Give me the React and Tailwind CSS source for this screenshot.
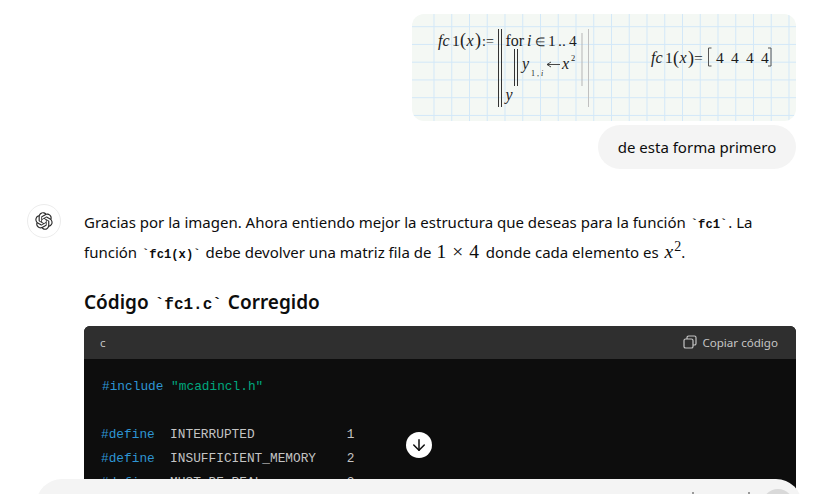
import React from 'react';
import { ArrowDown } from 'lucide-react';

const codeFont = { fontFamily: '"Liberation Mono", monospace' };
const mathFont = { fontFamily: '"Liberation Serif", serif' };

function FormulaImage() {
  const gridX = Array.from({ length: 22 }, (_, i) => 22 + i * 17.75);
  const gridY = Array.from({ length: 6 }, (_, i) => 12.7 + i * 17.75);
  return (
    <svg width="384" height="107" viewBox="0 0 384 107" className="block rounded-xl bg-[#f4f8f4]" fontFamily="Liberation Serif, serif" fill="#1c1c1c">
      {gridX.map((x) => <line key={x} x1={x} y1="0" x2={x} y2="107" stroke="#d3e8f8" strokeWidth="1" />)}
      {gridY.map((y) => <line key={y} x1="0" y1={y} x2="384" y2={y} stroke="#d3e8f8" strokeWidth="1" />)}

      <text x="26" y="31.5" fontSize="16" fontStyle="italic">fc</text>
      <text x="40" y="31.5" fontSize="15.5">1</text>
      <text x="48" y="32" fontSize="18">(</text>
      <text x="54.5" y="31.5" fontSize="16" fontStyle="italic">x</text>
      <text x="63" y="32" fontSize="18">)</text>
      <text x="70" y="31.5" fontSize="14">:=</text>

      <line x1="86.5" y1="15" x2="86.5" y2="93" stroke="#333" />
      <line x1="89.5" y1="15" x2="89.5" y2="93" stroke="#333" />
      <text x="93.5" y="31.5" fontSize="16">for</text>
      <text x="115" y="31.5" fontSize="16" fontStyle="italic">i</text>
      <text x="123" y="31.5" fontSize="12">∈</text>
      <text x="136" y="31.5" fontSize="15.5">1</text>
      <text x="146" y="31.5" fontSize="15.5">..</text>
      <text x="157" y="31.5" fontSize="15.5">4</text>

      <line x1="102.5" y1="35" x2="102.5" y2="72" stroke="#333" />
      <line x1="105.5" y1="35" x2="105.5" y2="72" stroke="#333" />
      <text x="110" y="55" fontSize="16" fontStyle="italic">y</text>
      <text x="119" y="62" fontSize="8">1</text>
      <text x="125" y="62" fontSize="8">,</text>
      <text x="129" y="62" fontSize="8" fontStyle="italic">i</text>
      <path d="M135 50.5H148M135 50.5L139 48M135 50.5L139 53" fill="none" stroke="#333" strokeWidth="0.9" />
      <text x="150" y="54.5" fontSize="16" fontStyle="italic">x</text>
      <text x="159" y="47" fontSize="8.5">2</text>
      <text x="93.5" y="86" fontSize="16" fontStyle="italic">y</text>

      <line x1="170" y1="19" x2="170" y2="72" stroke="#b5b5b5" />
      <line x1="176.5" y1="15" x2="176.5" y2="93" stroke="#c0c0c0" />

      <text x="239" y="49" fontSize="16" fontStyle="italic">fc</text>
      <text x="253" y="49" fontSize="15.5">1</text>
      <text x="261" y="49.5" fontSize="18">(</text>
      <text x="267.5" y="49" fontSize="16" fontStyle="italic">x</text>
      <text x="276" y="49.5" fontSize="18">)</text>
      <text x="282" y="49" fontSize="15.5">=</text>
      <path d="M299.5 34H296.5V52H299.5" fill="none" stroke="#555" />
      <text x="304" y="49" fontSize="15.5">4</text>
      <text x="319" y="49" fontSize="15.5">4</text>
      <text x="334" y="49" fontSize="15.5">4</text>
      <text x="349" y="49" fontSize="15.5">4</text>
      <path d="M356 34H359V52H356" fill="none" stroke="#555" />
    </svg>
  );
}

function GptLogo() {
  return (
    <svg width="18" height="18" viewBox="0 0 41 41" fill="#2b2b2b">
      <path d="M37.5324 16.8707C37.9808 15.5241 38.1363 14.0974 37.9886 12.6859C37.8409 11.2744 37.3934 9.91076 36.676 8.68622C35.6126 6.83404 33.9882 5.3676 32.0373 4.4985C30.0864 3.62941 27.9098 3.40259 25.8215 3.85078C24.8796 2.7893 23.7219 1.94125 22.4257 1.36341C21.1295 0.785575 19.7249 0.491269 18.3058 0.500197C16.1708 0.495044 14.0893 1.16803 12.3614 2.42214C10.6335 3.67624 9.34853 5.44666 8.6917 7.47815C7.30085 7.76286 5.98686 8.3414 4.8377 9.17505C3.68854 10.0087 2.73073 11.0782 2.02839 12.312C0.956464 14.1591 0.498905 16.2988 0.721698 18.4228C0.944492 20.5467 1.83612 22.5449 3.268 24.1293C2.81966 25.4759 2.66413 26.9026 2.81182 28.3141C2.95951 29.7256 3.40701 31.0892 4.12437 32.3138C5.18791 34.1659 6.8123 35.6322 8.76321 36.5013C10.7141 37.3704 12.8907 37.5973 14.9789 37.1492C15.9208 38.2107 17.0786 39.0587 18.3747 39.6366C19.6709 40.2144 21.0755 40.5087 22.4946 40.4998C24.6307 40.5054 26.7133 39.8321 28.4418 38.5772C30.1704 37.3223 31.4556 35.5506 32.1119 33.5179C33.5027 33.2332 34.8167 32.6547 35.9659 31.821C37.115 30.9874 38.0728 29.9178 38.7752 28.684C39.8458 26.8371 40.3023 24.6979 40.0789 22.5748C39.8556 20.4517 38.9639 18.4544 37.5324 16.8707ZM22.4978 37.8849C20.7443 37.8874 19.0459 37.2733 17.6994 36.1501C17.7601 36.117 17.8666 36.0586 17.936 36.0161L25.9004 31.4156C26.1003 31.3019 26.2663 31.137 26.3813 30.9378C26.4964 30.7386 26.5563 30.5124 26.5549 30.2825V19.0542L29.9213 20.998C29.9389 21.0068 29.9541 21.0198 29.9656 21.0359C29.977 21.052 29.9842 21.0707 29.9867 21.0902V30.3889C29.9842 32.375 29.1946 34.2791 27.7909 35.6841C26.3872 37.0892 24.4838 37.8806 22.4978 37.8849ZM6.39227 31.0064C5.51397 29.4888 5.19742 27.7107 5.49804 25.9832C5.55718 26.0187 5.66048 26.0818 5.73461 26.1244L13.699 30.7248C13.8975 30.8408 14.1233 30.902 14.3532 30.902C14.583 30.902 14.8088 30.8408 15.0073 30.7248L24.731 25.1103V28.9979C24.7321 29.0177 24.7283 29.0376 24.7199 29.0556C24.7115 29.0736 24.6988 29.0893 24.6829 29.1012L16.6317 33.7497C14.9096 34.7416 12.8643 35.0097 10.9447 34.4954C9.02506 33.9811 7.38785 32.7263 6.39227 31.0064ZM4.29707 13.6194C5.17156 12.0998 6.55279 10.9364 8.19885 10.3327C8.19885 10.4013 8.19491 10.5228 8.19491 10.6071V19.808C8.19351 20.0378 8.25334 20.2638 8.36823 20.4629C8.48312 20.6619 8.64893 20.8267 8.84863 20.9404L18.5723 26.5542L15.206 28.4979C15.1894 28.5089 15.1703 28.5155 15.1505 28.5173C15.1307 28.5191 15.1107 28.516 15.0924 28.5082L7.04046 23.8557C5.32135 22.8601 4.06716 21.2235 3.55289 19.3046C3.03862 17.3858 3.30624 15.3413 4.29707 13.6194ZM31.955 20.0556L22.2312 14.4411L25.5976 12.4981C25.6142 12.4872 25.6333 12.4805 25.6531 12.4787C25.6729 12.4769 25.6928 12.4801 25.7111 12.4879L33.7631 17.1364C34.9967 17.849 36.0017 18.8982 36.6606 20.1613C37.3194 21.4244 37.6047 22.849 37.4832 24.2684C37.3617 25.6878 36.8382 27.0432 35.9743 28.1759C35.1103 29.3086 33.9415 30.1717 32.6047 30.6641C32.6047 30.5947 32.6047 30.4733 32.6047 30.3889V21.188C32.6066 20.9586 32.5474 20.7328 32.4332 20.5338C32.319 20.3348 32.154 20.1698 31.955 20.0556ZM35.3055 15.0128C35.2464 14.9765 35.1431 14.9142 35.069 14.8717L27.1045 10.2712C26.906 10.1554 26.6803 10.0943 26.4504 10.0943C26.2206 10.0943 25.9948 10.1554 25.7963 10.2712L16.0726 15.8858V11.9982C16.0715 11.9783 16.0753 11.9585 16.0837 11.9405C16.0921 11.9225 16.1048 11.9068 16.1207 11.8949L24.1719 7.25025C25.4053 6.53903 26.8158 6.19376 28.2383 6.25482C29.6608 6.31589 31.0364 6.78077 32.2044 7.59508C33.3723 8.40939 34.2842 9.53945 34.8334 10.8531C35.3826 12.1667 35.5464 13.6095 35.3055 15.0128ZM14.2424 21.9419L10.8752 19.9981C10.8576 19.9893 10.8423 19.9763 10.8309 19.9602C10.8195 19.9441 10.8122 19.9254 10.8098 19.9058V10.6071C10.8107 9.18295 11.2173 7.78848 11.9819 6.58696C12.7466 5.38544 13.8377 4.42659 15.1275 3.82264C16.4173 3.21869 17.8524 2.99464 19.2649 3.1767C20.6775 3.35876 22.0089 3.93941 23.1034 4.85067C23.0427 4.88379 22.937 4.94215 22.8668 4.98473L14.9024 9.58517C14.7025 9.69878 14.5366 9.86356 14.4215 10.0626C14.3065 10.2616 14.2466 10.4877 14.2479 10.7175L14.2424 21.9419ZM16.071 17.9991L20.4018 15.4978L24.7325 17.9975V22.9985L20.4018 25.4983L16.071 22.9985V17.9991Z" />
    </svg>
  );
}

function CopyIcon() {
  return (
    <svg width="14" height="14" viewBox="0 0 14 14" fill="none" stroke="currentColor" strokeWidth="1.2" className="shrink-0">
      <rect x="1" y="4" width="9" height="9" rx="1.6" />
      <path d="M4 4V2.6A1.6 1.6 0 0 1 5.6 1h5.8A1.6 1.6 0 0 1 13 2.6v5.8A1.6 1.6 0 0 1 11.4 10H10" />
    </svg>
  );
}

function Tick({ children }) {
  return <code className="mx-[1px] text-[12.2px] font-bold leading-none" style={codeFont}>`{children}`</code>;
}

function DefineLine({ name, pad, value }) {
  return (
    <div className="ml-[-1px]">
      <span className="text-[#2e95d3]">#define</span>
      <span className="text-[#c4c4c4]">{'  ' + name + ' '.repeat(pad)}{value}</span>
    </div>
  );
}

export default function App() {
  return (
    <div className="relative h-[494px] w-[829px] overflow-hidden bg-white text-[#0d0d0d]" style={{ fontFamily: '"Noto Sans", sans-serif' }}>
      <div className="flex flex-col items-end pt-[14px] pr-[33px]">
        <FormulaImage />
        <div className="mt-1 flex h-[44px] w-[198px] items-center justify-center rounded-[22px] bg-[#f4f4f4] text-[15px]">
          de esta forma primero
        </div>
      </div>

      <div className="mt-[35px] flex pl-[27px] pr-[33px]">
        <div className="flex h-[34px] w-[34px] shrink-0 items-center justify-center rounded-full border border-[#ececec]">
          <GptLogo />
        </div>
        <div className="ml-[23px] min-w-0 flex-1">
          <p className="mt-[3px] text-[15px] leading-[30px]">
            Gracias por la imagen. Ahora entiendo mejor la estructura que deseas para la función <Tick>fc1</Tick>. La función <Tick>fc1(x)</Tick> debe devolver una matriz fila de{' '}
            <span className="ml-[1px] mr-[3px] text-[19.5px] leading-none" style={mathFont}>1<span className="mx-[6px]">×</span>4</span> donde cada elemento es{' '}
            <span className="ml-[2px] text-[19.5px] leading-none" style={mathFont}><i>x</i><sup className="ml-[1px] text-[14px]">2</sup></span>.
          </p>
          <h3 className="mt-[21px] text-[19px] font-semibold leading-[28px]">
            Código <code className="mx-[1px] text-[16px] font-bold" style={codeFont}>`fc1.c`</code> Corregido
          </h3>
          <div className="mt-[7px] overflow-hidden rounded-t-md bg-[#0d0d0d]">
            <div className="flex h-[33px] items-center justify-between bg-[#2f2f2f] pl-4 pr-[18px] text-[11.6px] text-[#c5c5c5]">
              <span>c</span>
              <span className="flex items-center gap-[5px]"><CopyIcon />Copiar código</span>
            </div>
            <pre className="px-[18px] pt-[16px] text-[12.8px] leading-[24px]" style={codeFont}>
              <div>
                <span className="text-[#2e95d3]">#include</span>
                <span className="text-[#00a67d]"> "mcadincl.h"</span>
              </div>
              <div className="h-6" />
              <DefineLine name="INTERRUPTED" pad={12} value="1" />
              <DefineLine name="INSUFFICIENT_MEMORY" pad={4} value="2" />
              <DefineLine name="MUST_BE_REAL" pad={11} value="3" />
            </pre>
          </div>
        </div>
      </div>

      {/* scroll-to-bottom button */}
      <div className="absolute left-[406px] top-[432px] flex h-[26px] w-[26px] items-center justify-center rounded-full bg-white text-[#0d0d0d]">
        <ArrowDown size={18} strokeWidth={2} />
      </div>

      {/* composer, almost entirely below the fold */}
      <div className="absolute left-[36px] top-[479px] flex h-[60px] w-[766px] justify-end rounded-[26px] bg-[#f4f4f4] pr-[8px] pt-[10px]">
        <div className="mt-[3px] h-2 w-[2px] bg-[#9a9a9a]" />
        <div className="ml-[54px] mt-[3px] h-2 w-[2px] bg-[#9a9a9a]" />
        <div className="ml-[12px] h-8 w-8 rounded-full bg-[#d9d9d9]" />
      </div>
    </div>
  );
}
